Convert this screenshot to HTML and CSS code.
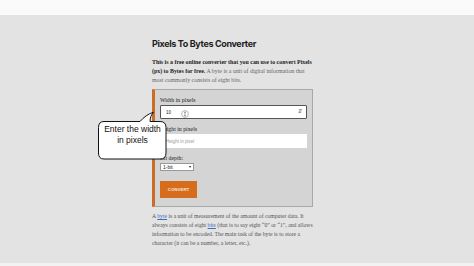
FILE: index.html
```html
<!DOCTYPE html>
<html lang="en">
  <head>
    <meta charset="UTF-8" />
    <meta name="viewport" content="width=device-width, initial-scale=1.0" />
    <title>Pixels To Bytes Converter</title>
    <link rel="stylesheet" href="styles.css">
  </head>
  <body>
    <div class="topbar"></div>
    <main class="page">
      <h1>Pixels To Bytes Converter</h1>
      <p class="intro">
        <b>This is a free online converter that you can use to convert Pixels (px) to Bytes for free.</b>
        A byte is a unit of digital information that most commonly consists of eight bits.
      </p>

      <form class="converter">
        <div class="form-group">
          <label for="width">Width in pixels</label>
          <div class="number-field">
            <input type="text" id="width" value="10" />
            <span class="spin">&#8693;</span>
            <svg class="ibeam" width="8" height="8" viewBox="0 0 8 8">
              <circle cx="4" cy="4" r="3.4" fill="none" stroke="#888" stroke-width="0.6" />
              <path d="M3 2.2h2M4 2.2v3.6M3 5.8h2" stroke="#666" stroke-width="0.6" fill="none" />
            </svg>
          </div>
        </div>
        <div class="form-group">
          <label for="height">Height in pixels</label>
          <input type="text" id="height" placeholder="Height in pixel" />
        </div>
        <div class="form-group">
          <label for="depth">Bit depth:</label>
          <div class="select">1-bit <span class="caret">&#9662;</span></div>
        </div>
        <button type="button">CONVERT</button>

        <div class="callout">
          <svg class="bubble" width="72" height="52" viewBox="0 0 72 52">
            <path d="M6 10.5 H42 C46 6 50 3 55.5 1.2 C53 4 52 7 52 10.5 H62 Q68 10.5 68 16.5 V42 Q68 48 62 48 H6 Q0.5 48 0.5 42 V16.5 Q0.5 10.5 6 10.5 Z"
              fill="#fff" stroke="#111" stroke-width="1" />
          </svg>
          <div class="callout-text">Enter the width<br />in pixels</div>
        </div>
      </form>

      <p class="outro">
        A <a href="#">byte</a> is a unit of measurement of the amount of computer data. It
        always consists of eight <a href="#">bits</a> (that is to say eight “0” or “1”, and allows
        information to be encoded. The main task of the byte is to store a
        character (it can be a number, a letter, etc.).
      </p>
    </main>
    <div class="bottombar"></div>
  </body>
</html>
```

FILE: styles.css
```css
body {
  margin: 0;
  background-color: #e3e3e3;
  font-family: "Liberation Serif", serif;
  height: 266px;
  display: flex;
  flex-direction: column;
}

.topbar {
  height: 15px;
  background-color: #fafafa;
}

.bottombar {
  margin-top: auto;
  height: 3px;
  background-color: #f2f2f2;
}

.page {
  width: 161px;
  margin-left: 152px;
}

h1 {
  font-family: Inter, sans-serif;
  font-size: 9px;
  font-weight: 700;
  letter-spacing: -0.35px;
  color: #1c1c1c;
  margin: 22px 0 0;
  line-height: 14px;
}

.intro {
  font-size: 5.9px;
  line-height: 9px;
  color: #666;
  margin: 7px 0 0;
}

.intro b {
  color: #222;
}

.converter {
  position: relative;
  margin-top: 4px;
  height: 118px;
  background-color: #d4d4d4;
  border: 1px solid #a8a8a8;
  border-left: 3px solid #cc6d26;
  padding: 6px 5px 0 5px;
  box-sizing: border-box;
}

.form-group {
  margin-bottom: 6px;
}

label {
  display: block;
  font-size: 5.8px;
  line-height: 8px;
  color: #222;
}

input {
  display: block;
  width: 100%;
  box-sizing: border-box;
  height: 14px;
  margin: 1px 0 0;
  padding: 0 5px;
  border: 1px solid #fff;
  background: #fff;
  font-family: "Liberation Sans", sans-serif;
  font-size: 4.5px;
  color: #222;
  outline: none;
}

input::placeholder {
  color: #999;
}

.number-field {
  position: relative;
}

.number-field input {
  border-color: #555;
  border-radius: 1px;
}

.spin {
  position: absolute;
  right: 5px;
  top: 4px;
  font-size: 5px;
  line-height: 6px;
  color: #555;
}

.ibeam {
  position: absolute;
  left: 21px;
  top: 5px;
}

.select {
  width: 34px;
  height: 8px;
  margin-top: 1px;
  background: #fff;
  border: 1px solid #999;
  box-sizing: border-box;
  font-family: "Liberation Sans", sans-serif;
  font-size: 5px;
  line-height: 6px;
  padding-left: 2px;
  display: flex;
  justify-content: space-between;
  color: #222;
}

.caret {
  font-size: 4px;
  padding-right: 2px;
}

button {
  margin-top: 4px;
  width: 37px;
  height: 17px;
  background-color: #d66d1c;
  border: none;
  color: #fbe6d6;
  font-family: "Liberation Sans", sans-serif;
  font-size: 4.4px;
  font-weight: 700;
  padding: 0;
}

.callout {
  position: absolute;
  left: -57px;
  top: 21px;
  width: 72px;
  height: 52px;
}

.bubble {
  display: block;
}

.callout-text {
  position: absolute;
  left: 0;
  top: 13px;
  width: 69px;
  text-align: center;
  font-family: "Liberation Sans", sans-serif;
  font-size: 8.5px;
  line-height: 11px;
  color: #111;
}

.outro {
  font-size: 5.7px;
  line-height: 9px;
  color: #555;
  margin: 5px 0 0;
}

.outro a {
  color: #3a6cc0;
}
```
